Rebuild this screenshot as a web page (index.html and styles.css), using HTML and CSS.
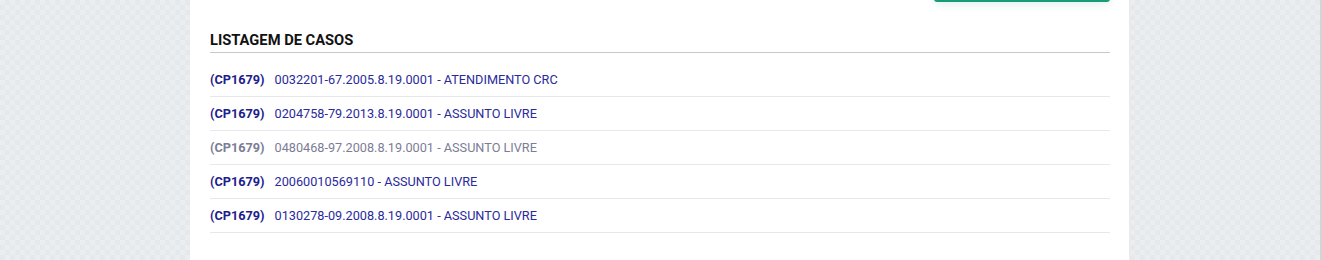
FILE: index.html
```html
<!DOCTYPE html>
<html lang="pt-BR">
<head>
  <meta charset="UTF-8">
  <meta name="viewport" content="width=device-width, initial-scale=1.0">
  <title>Listagem de casos</title>
  <link rel="stylesheet" href="styles.css">
</head>
<body>
  <div class="page">
    <div class="panel">
      <div class="toolbar">
        <button class="btn-novo" type="button" aria-label="Novo caso"></button>
      </div>

      <h2 class="titulo">LISTAGEM DE CASOS</h2>

      <ul class="casos">
        <li class="caso"><span class="cod">(CP1679)</span>0032201-67.2005.8.19.0001 - ATENDIMENTO CRC</li>
        <li class="caso"><span class="cod">(CP1679)</span>0204758-79.2013.8.19.0001 - ASSUNTO LIVRE</li>
        <li class="caso inativo"><span class="cod">(CP1679)</span>0480468-97.2008.8.19.0001 - ASSUNTO LIVRE</li>
        <li class="caso"><span class="cod">(CP1679)</span>20060010569110 - ASSUNTO LIVRE</li>
        <li class="caso"><span class="cod">(CP1679)</span>0130278-09.2008.8.19.0001 - ASSUNTO LIVRE</li>
      </ul>
    </div>
  </div>
</body>
</html>
```

FILE: styles.css
```css
html, body{
  margin: 0;
  height: 100%;
}
body{
  font-family: Roboto, "Liberation Sans", Arial, sans-serif;
  background-color: #ebeef0;
  background-image:
    linear-gradient(45deg, #e5e9eb 25%, transparent 25%, transparent 75%, #e5e9eb 75%),
    linear-gradient(45deg, #e5e9eb 25%, transparent 25%, transparent 75%, #e5e9eb 75%);
  background-size: 10px 10px;
  background-position: 0 0, 5px 5px;
  overflow: hidden;
}
.page{
  height: 100%;
  padding-left: 190px;
  border-right: 2px solid #d2d5d7;
  box-sizing: border-box;
}
.panel{
  width: 939px;
  height: 100%;
  box-sizing: border-box;
  padding: 0 19px 0 20px;
  background-color: #fff;
}
.toolbar{
  display: flex;
  justify-content: flex-end;
  height: 2px;
}
.btn-novo{
  width: 176px;
  height: 34px;
  margin-top: -32px;
  border: 0;
  border-radius: 3px;
  background-color: #1a9b78;
  box-shadow: 0 3px 8px rgba(26, 155, 120, .12);
}
.titulo{
  margin: 29px 0 0;
  padding-bottom: 3px;
  font-size: 14.7px;
  line-height: 18px;
  font-weight: 700;
  color: #111;
  border-bottom: 1px solid #c9c9c9;
}
.casos{
  list-style: none;
  margin: 10px 0 0;
  padding: 0;
}
.caso{
  padding: 9px 0;
  line-height: 15px;
  font-size: 12.7px;
  color: #2a2a9c;
  border-bottom: 1px solid #e8e8ec;
}
.cod{
  font-weight: 700;
  color: #1d1d8c;
  margin-right: 10px;
}
.inativo,
.inativo .cod{
  color: #7c7c96;
}
```
